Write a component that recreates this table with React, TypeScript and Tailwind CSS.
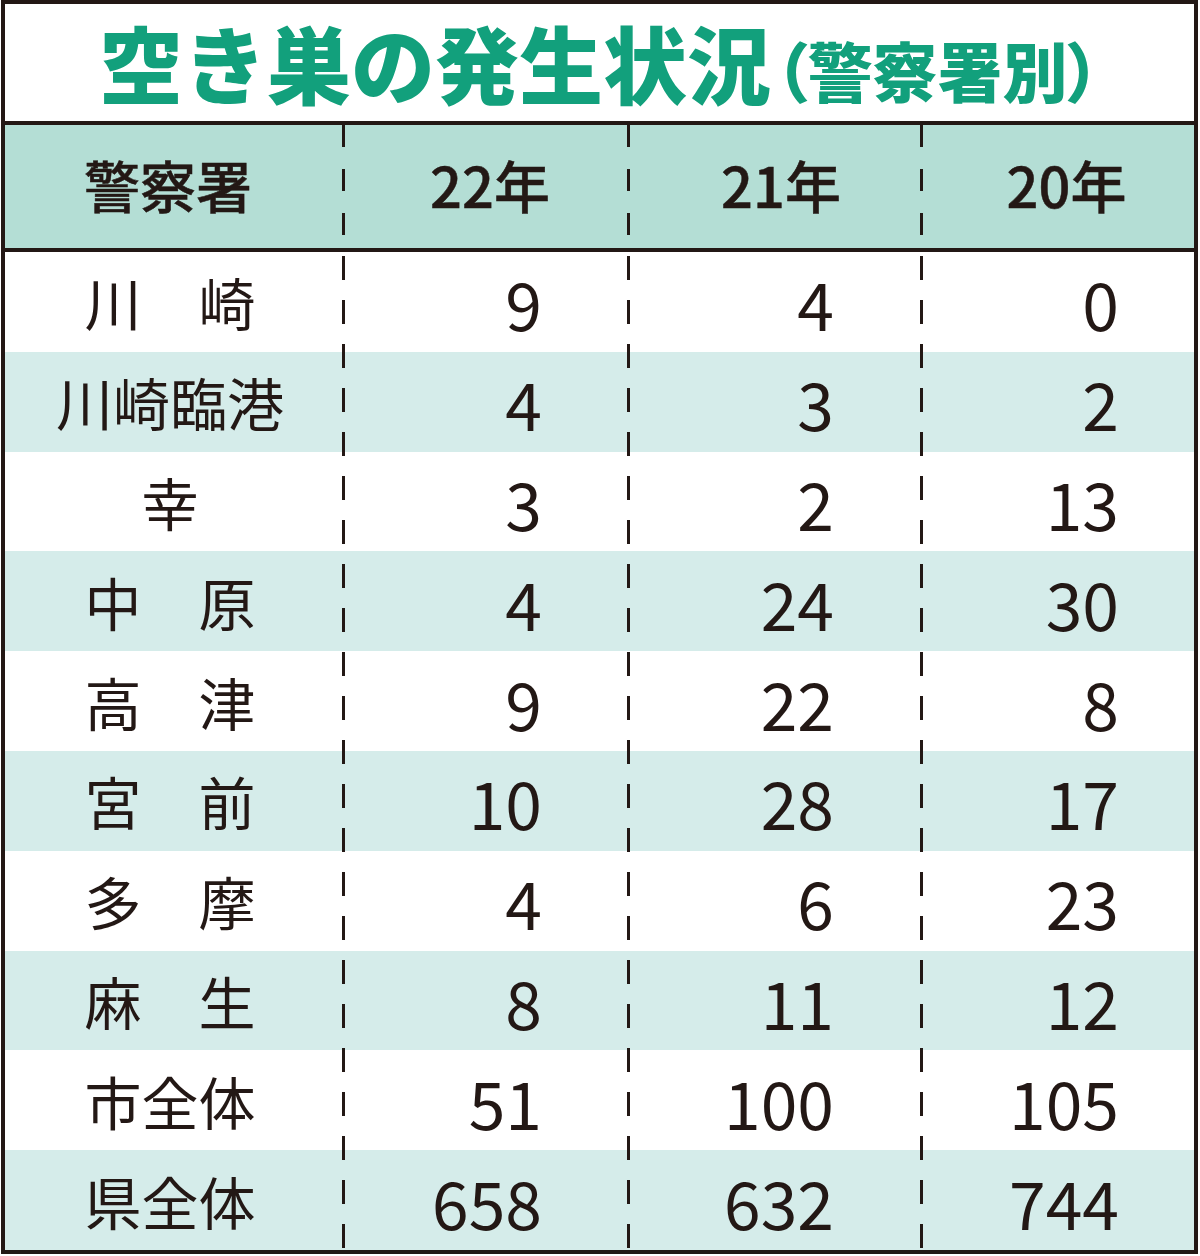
import React from "react";

const rows: [string, string, string, string][] = [
  ["川　崎", "9", "4", "0"],
  ["川崎臨港", "4", "3", "2"],
  ["幸", "3", "2", "13"],
  ["中　原", "4", "24", "30"],
  ["高　津", "9", "22", "8"],
  ["宮　前", "10", "28", "17"],
  ["多　摩", "4", "6", "23"],
  ["麻　生", "8", "11", "12"],
  ["市全体", "51", "100", "105"],
  ["県全体", "658", "632", "744"],
];

const font = "font-['Noto_Sans_CJK_JP','Noto_Sans',sans-serif]";

function Dashes({ body }: { body?: boolean }) {
  const cls = body
    ? "bg-[image:repeating-linear-gradient(to_bottom,transparent_0_4px,#231815_4px_28px,transparent_28px_44px)]"
    : "bg-[image:repeating-linear-gradient(to_bottom,#231815_0_22px,transparent_22px_44px)]";
  return (
    <>
      <div className={`absolute top-0 bottom-0 left-[337px] w-[3px] ${cls}`} />
      <div className={`absolute top-0 bottom-0 left-[622px] w-[3px] ${cls}`} />
      <div className={`absolute top-0 bottom-0 left-[915px] w-[3px] ${cls}`} />
    </>
  );
}

export default function App() {
  return (
    <div className={`w-[1200px] h-[1256px] bg-white ${font} text-[#231815]`}>
      <div className="ml-[1px] w-[1197px] h-[1254px] border-[4px] border-[#231815] flex flex-col">
        <div className="h-[121px] shrink-0 flex items-center justify-center border-b-[4px] border-[#231815] text-[#12a07c] font-black">
          <div className="flex items-end pb-[2px]">
            <span className="text-[84px] leading-none">空き巣の発生状況</span>
            <span className="text-[65px] leading-none [font-feature-settings:'palt'] mb-[2px] ml-[4px]">（警察署別）</span>
          </div>
        </div>
        <div className="relative h-[127px] shrink-0 grid grid-cols-[338px_286px_292px_1fr] bg-[#b4ded5] border-b-[4px] border-[#231815] text-[56px] font-medium leading-none [-webkit-text-stroke:0.5px_#231815]">
          <div className="flex items-center justify-center pr-[12px] pb-[6px]">警察署</div>
          <div className="flex items-center justify-center pl-[8px] pb-[6px]">22年</div>
          <div className="flex items-center justify-center pl-[12px] pb-[6px]">21年</div>
          <div className="flex items-center justify-center pl-[18px] pb-[6px]">20年</div>
          <Dashes />
        </div>
        <div className="relative flex-1 flex flex-col">
          {rows.map((r, i) => (
            <div
              key={i}
              className={`flex-1 grid grid-cols-[338px_286px_292px_1fr] ${i % 2 === 1 ? "bg-[#d5ecea]" : "bg-white"}`}
            >
              <div className="flex items-center justify-center pr-[8px] text-[57px] leading-none">{r[0]}</div>
              <div className="flex items-center justify-end pr-[87px] pt-[1px] text-[66px] leading-none">{r[1]}</div>
              <div className="flex items-center justify-end pr-[87px] pt-[1px] text-[66px] leading-none">{r[2]}</div>
              <div className="flex items-center justify-end pr-[75px] pt-[1px] text-[66px] leading-none">{r[3]}</div>
            </div>
          ))}
          <Dashes body />
        </div>
      </div>
    </div>
  );
}
